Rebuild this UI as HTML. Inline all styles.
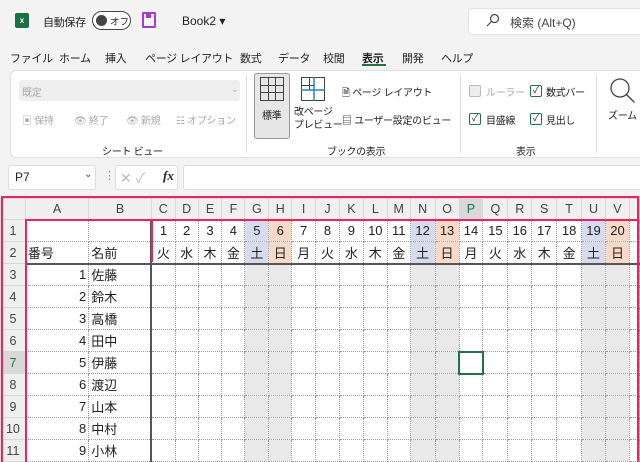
<!DOCTYPE html>
<html><head><meta charset="utf-8"><style>
*{margin:0;padding:0;box-sizing:border-box}
body{width:640px;height:462px;overflow:hidden;background:#f3f3f3;font-family:"Liberation Sans","Noto Sans CJK JP",sans-serif;color:#222;position:relative;font-size:11px}
.a{position:absolute;white-space:nowrap}
.g{color:#a8a8a8}
.tab{top:50px;font-size:11px;letter-spacing:-0.3px}
.rb{font-size:10px;letter-spacing:-0.3px}
table{position:absolute;left:0;top:198px;border-collapse:collapse;table-layout:fixed;background:#fff;font-size:13px}
td{border:1px dotted #9a9a9a;height:22px;padding:0 2px;overflow:hidden;white-space:nowrap;text-align:center}
tr.h td{background:#efefef;border:1px solid #d8d8d8;height:21px;color:#444;font-size:12.5px}
td.rh{background:#efefef;border:1px solid #d8d8d8;color:#444;text-align:center;padding:0;font-size:12.5px}
td.n{text-align:right}td.t{text-align:left}
td.tb{border-right:2px solid #555}
tr.r2 td{border-bottom:2px solid #555}
tr.r2 td.rh{border-bottom:1px solid #d8d8d8}
.sa{background:#d6dcee}.su{background:#f8d8c6}
col.w{background:#e9e9e9}
.pk{position:absolute;background:#f0215f}
.cb{position:absolute;width:12px;height:12px;border:1.5px solid #217346;border-radius:2px;font-size:9px;line-height:9px;text-align:center}
</style></head><body>
<div class="a" style="left:15px;top:13px;width:14px;height:15px;background:#1d7044;border-radius:2px;color:#fff;font-size:8px;font-weight:bold;text-align:center;line-height:15px">x</div>
<div class="a" style="left:43px;top:14px;font-size:11px;letter-spacing:-0.3px">自動保存</div>
<div class="a" style="left:92px;top:11px;width:39px;height:19px;border:1.5px solid #444;border-radius:10px;background:#fff"><div style="position:absolute;left:3px;top:3px;width:11px;height:11px;border-radius:50%;background:#444"></div><span style="position:absolute;left:17px;top:2px;font-size:9.5px">オフ</span></div>
<div class="a" style="left:142px;top:12px;width:14px;height:16px;border:2.5px solid #a43fbf;border-radius:1px"><div style="position:absolute;left:2px;top:0;width:5px;height:4px;background:#a43fbf"></div></div>
<div class="a" style="left:182px;top:14px;font-size:12px">Book2 ▾</div>
<div class="a" style="left:468px;top:8px;width:180px;height:27px;background:#fff;border-radius:4px;border:1px solid #e2e2e2"></div>
<svg class="a" style="left:486px;top:13px" width="14" height="14"><circle cx="8.5" cy="5.5" r="4" fill="none" stroke="#444" stroke-width="1.2"/><path d="M5.5 8.5L1 13" stroke="#444" stroke-width="1.2"/></svg>
<div class="a" style="left:510px;top:14px;font-size:12px;color:#444">検索 (Alt+Q)</div>
<div class="a tab" style="left:10px">ファイル</div>
<div class="a tab" style="left:59px">ホーム</div>
<div class="a tab" style="left:105px">挿入</div>
<div class="a tab" style="left:145px">ページ レイアウト</div>
<div class="a tab" style="left:240px">数式</div>
<div class="a tab" style="left:278px">データ</div>
<div class="a tab" style="left:323px">校閲</div>
<div class="a tab" style="left:362px;font-weight:bold">表示</div>
<div class="a" style="left:362px;top:64px;width:24px;height:2px;background:#217346"></div>
<div class="a tab" style="left:402px">開発</div>
<div class="a tab" style="left:441px">ヘルプ</div>
<div class="a" style="left:10px;top:70px;width:640px;height:88px;background:#fff;border:1px solid #e0e0e0;border-radius:6px"></div>
<div class="a" style="left:19px;top:80px;width:221px;height:21px;background:#efefef;border-radius:3px"></div>
<div class="a g rb" style="left:22px;top:84px">既定</div>
<div class="a g" style="left:231px;top:84px;font-size:9px">⌄</div>
<div class="a g rb" style="left:22px;top:112px">▣ 保持</div>
<div class="a g rb" style="left:74px;top:112px">👁 終了</div>
<div class="a g rb" style="left:126px;top:112px">👁 新規</div>
<div class="a g rb" style="left:176px;top:112px">☷ オプション</div>
<div class="a rb" style="left:102px;top:143px">シート ビュー</div>
<div class="a" style="left:246px;top:75px;width:1px;height:78px;background:#ddd"></div>
<div class="a" style="left:254px;top:73px;width:36px;height:66px;background:#e6e6e6;border:1px solid #999;border-radius:3px"></div>
<svg class="a" style="left:260px;top:77px" width="24" height="24"><g fill="none" stroke="#444" stroke-width="1"><rect x=".5" y=".5" width="23" height="23"/><path d="M8.5 0v24M15.5 0v24M0 8.5h24M0 15.5h24"/></g></svg>
<div class="a rb" style="left:262px;top:107px">標準</div>
<svg class="a" style="left:301px;top:77px" width="24" height="24"><g fill="none" stroke="#444"><rect x=".5" y=".5" width="23" height="23"/><path d="M8.5 0v13M0 8.5h13" /></g><path d="M13 0v24M0 13h24" stroke="#2b7cd3" stroke-width="1.5"/></svg>
<div class="a rb" style="left:294px;top:106px;line-height:13px">改ページ<br>プレビュー</div>
<div class="a rb" style="left:342px;top:84px">🗎 ページ レイアウト</div>
<div class="a rb" style="left:342px;top:112px">▤ ユーザー設定のビュー</div>
<div class="a rb" style="left:327px;top:143px">ブックの表示</div>
<div class="a" style="left:460px;top:75px;width:1px;height:78px;background:#ddd"></div>
<div class="a" style="left:469px;top:85px;width:12px;height:12px;border:1px solid #bbb;background:#eee;border-radius:2px"></div>
<div class="a g rb" style="left:486px;top:84px">ルーラー</div>
<div class="cb" style="left:530px;top:85px">✓</div>
<div class="a rb" style="left:546px;top:84px">数式バー</div>
<div class="cb" style="left:469px;top:113px">✓</div>
<div class="a rb" style="left:486px;top:112px">目盛線</div>
<div class="cb" style="left:530px;top:113px">✓</div>
<div class="a rb" style="left:546px;top:112px">見出し</div>
<div class="a rb" style="left:516px;top:143px">表示</div>
<div class="a" style="left:596px;top:75px;width:1px;height:78px;background:#ddd"></div>
<svg class="a" style="left:609px;top:77px" width="28" height="26"><circle cx="11" cy="11" r="9" fill="none" stroke="#444" stroke-width="1.3"/><path d="M17.5 17.5l8 8" stroke="#444" stroke-width="1.3"/></svg>
<div class="a rb" style="left:608px;top:107px">ズーム</div>
<div class="a" style="left:8px;top:165px;width:88px;height:25px;background:#fff;border:1px solid #ddd;border-radius:3px"></div>
<div class="a" style="left:15px;top:170px;font-size:12px">P7</div>
<div class="a" style="left:84px;top:169px;font-size:10px;color:#444">⌄</div>
<div class="a" style="left:104px;top:169px;font-size:11px;color:#888">⋮</div>
<div class="a" style="left:115px;top:165px;width:63px;height:25px;background:#fff;border:1px solid #ddd;border-radius:3px"></div>
<div class="a" style="left:120px;top:168px;font-size:14px;color:#bbb">✕ ✓</div>
<div class="a" style="left:163px;top:168px;font-size:13px;font-style:italic;font-weight:bold;font-family:'Liberation Serif',serif">fx</div>
<div class="a" style="left:183px;top:165px;width:470px;height:25px;background:#fff;border:1px solid #ddd;border-radius:3px"></div>
<table>
<colgroup><col style="width:25px"><col style="width:64px"><col style="width:63px"><col style="width:24px"><col style="width:23px"><col style="width:24px"><col style="width:23px"><col class="w" style="width:24px"><col class="w" style="width:23px"><col style="width:24px"><col style="width:24px"><col style="width:24px"><col style="width:24px"><col style="width:23px"><col class="w" style="width:25px"><col class="w" style="width:24px"><col style="width:24px"><col style="width:25px"><col style="width:24px"><col style="width:25px"><col style="width:25px"><col class="w" style="width:24px"><col class="w" style="width:24px"><col style="width:10px"></colgroup>
<tr class="h"><td style="background:#efefef"></td><td>A</td><td>B</td><td>C</td><td>D</td><td>E</td><td>F</td><td>G</td><td>H</td><td>I</td><td>J</td><td>K</td><td>L</td><td>M</td><td>N</td><td>O</td><td style="background:#d8d8d8;color:#217346">P</td><td>Q</td><td>R</td><td>S</td><td>T</td><td>U</td><td>V</td><td></td></tr>
<tr style="height:21px"><td class="rh">1</td><td style="background:#fff"></td><td class="tb" style="background:#fff"></td><td style="background:#fff">1</td><td style="background:#fff">2</td><td style="background:#fff">3</td><td style="background:#fff">4</td><td class="sa">5</td><td class="su">6</td><td>7</td><td>8</td><td>9</td><td>10</td><td>11</td><td class="sa">12</td><td class="su">13</td><td>14</td><td>15</td><td>16</td><td>17</td><td>18</td><td class="sa">19</td><td class="su">20</td><td></td></tr>
<tr class="r2"><td class="rh">2</td><td class="t" style="background:#fff">番号</td><td class="t tb" style="background:#fff">名前</td><td style="background:#fff">火</td><td style="background:#fff">水</td><td style="background:#fff">木</td><td style="background:#fff">金</td><td class="sa">土</td><td class="su">日</td><td>月</td><td>火</td><td>水</td><td>木</td><td>金</td><td class="sa">土</td><td class="su">日</td><td>月</td><td>火</td><td>水</td><td>木</td><td>金</td><td class="sa">土</td><td class="su">日</td><td></td></tr>
<tr><td class="rh">3</td><td class="n">1</td><td class="t tb">佐藤</td><td></td><td></td><td></td><td></td><td></td><td></td><td></td><td></td><td></td><td></td><td></td><td></td><td></td><td></td><td></td><td></td><td></td><td></td><td></td><td></td><td></td></tr>
<tr><td class="rh">4</td><td class="n">2</td><td class="t tb">鈴木</td><td></td><td></td><td></td><td></td><td></td><td></td><td></td><td></td><td></td><td></td><td></td><td></td><td></td><td></td><td></td><td></td><td></td><td></td><td></td><td></td><td></td></tr>
<tr><td class="rh">5</td><td class="n">3</td><td class="t tb">高橋</td><td></td><td></td><td></td><td></td><td></td><td></td><td></td><td></td><td></td><td></td><td></td><td></td><td></td><td></td><td></td><td></td><td></td><td></td><td></td><td></td><td></td></tr>
<tr><td class="rh">6</td><td class="n">4</td><td class="t tb">田中</td><td></td><td></td><td></td><td></td><td></td><td></td><td></td><td></td><td></td><td></td><td></td><td></td><td></td><td></td><td></td><td></td><td></td><td></td><td></td><td></td><td></td></tr>
<tr><td class="rh" style="background:#d8d8d8;color:#217346">7</td><td class="n">5</td><td class="t tb">伊藤</td><td></td><td></td><td></td><td></td><td></td><td></td><td></td><td></td><td></td><td></td><td></td><td></td><td></td><td style="border:2px solid #217346"></td><td></td><td></td><td></td><td></td><td></td><td></td><td></td></tr>
<tr><td class="rh">8</td><td class="n">6</td><td class="t tb">渡辺</td><td></td><td></td><td></td><td></td><td></td><td></td><td></td><td></td><td></td><td></td><td></td><td></td><td></td><td></td><td></td><td></td><td></td><td></td><td></td><td></td><td></td></tr>
<tr><td class="rh">9</td><td class="n">7</td><td class="t tb">山本</td><td></td><td></td><td></td><td></td><td></td><td></td><td></td><td></td><td></td><td></td><td></td><td></td><td></td><td></td><td></td><td></td><td></td><td></td><td></td><td></td><td></td></tr>
<tr><td class="rh">10</td><td class="n">8</td><td class="t tb">中村</td><td></td><td></td><td></td><td></td><td></td><td></td><td></td><td></td><td></td><td></td><td></td><td></td><td></td><td></td><td></td><td></td><td></td><td></td><td></td><td></td><td></td></tr>
<tr><td class="rh">11</td><td class="n">9</td><td class="t tb">小林</td><td></td><td></td><td></td><td></td><td></td><td></td><td></td><td></td><td></td><td></td><td></td><td></td><td></td><td></td><td></td><td></td><td></td><td></td><td></td><td></td><td></td></tr>
</table>
<div class="pk" style="left:1px;top:196px;width:638px;height:2px"></div>
<div class="pk" style="left:1px;top:196px;width:2px;height:266px"></div>
<div class="pk" style="left:637px;top:196px;width:2px;height:266px"></div>
<div class="pk" style="left:25px;top:219px;width:614px;height:2px"></div>
<div class="pk" style="left:25px;top:219px;width:2px;height:243px"></div>
<div class="pk" style="left:151px;top:219px;width:2px;height:43px"></div>
</body></html>
